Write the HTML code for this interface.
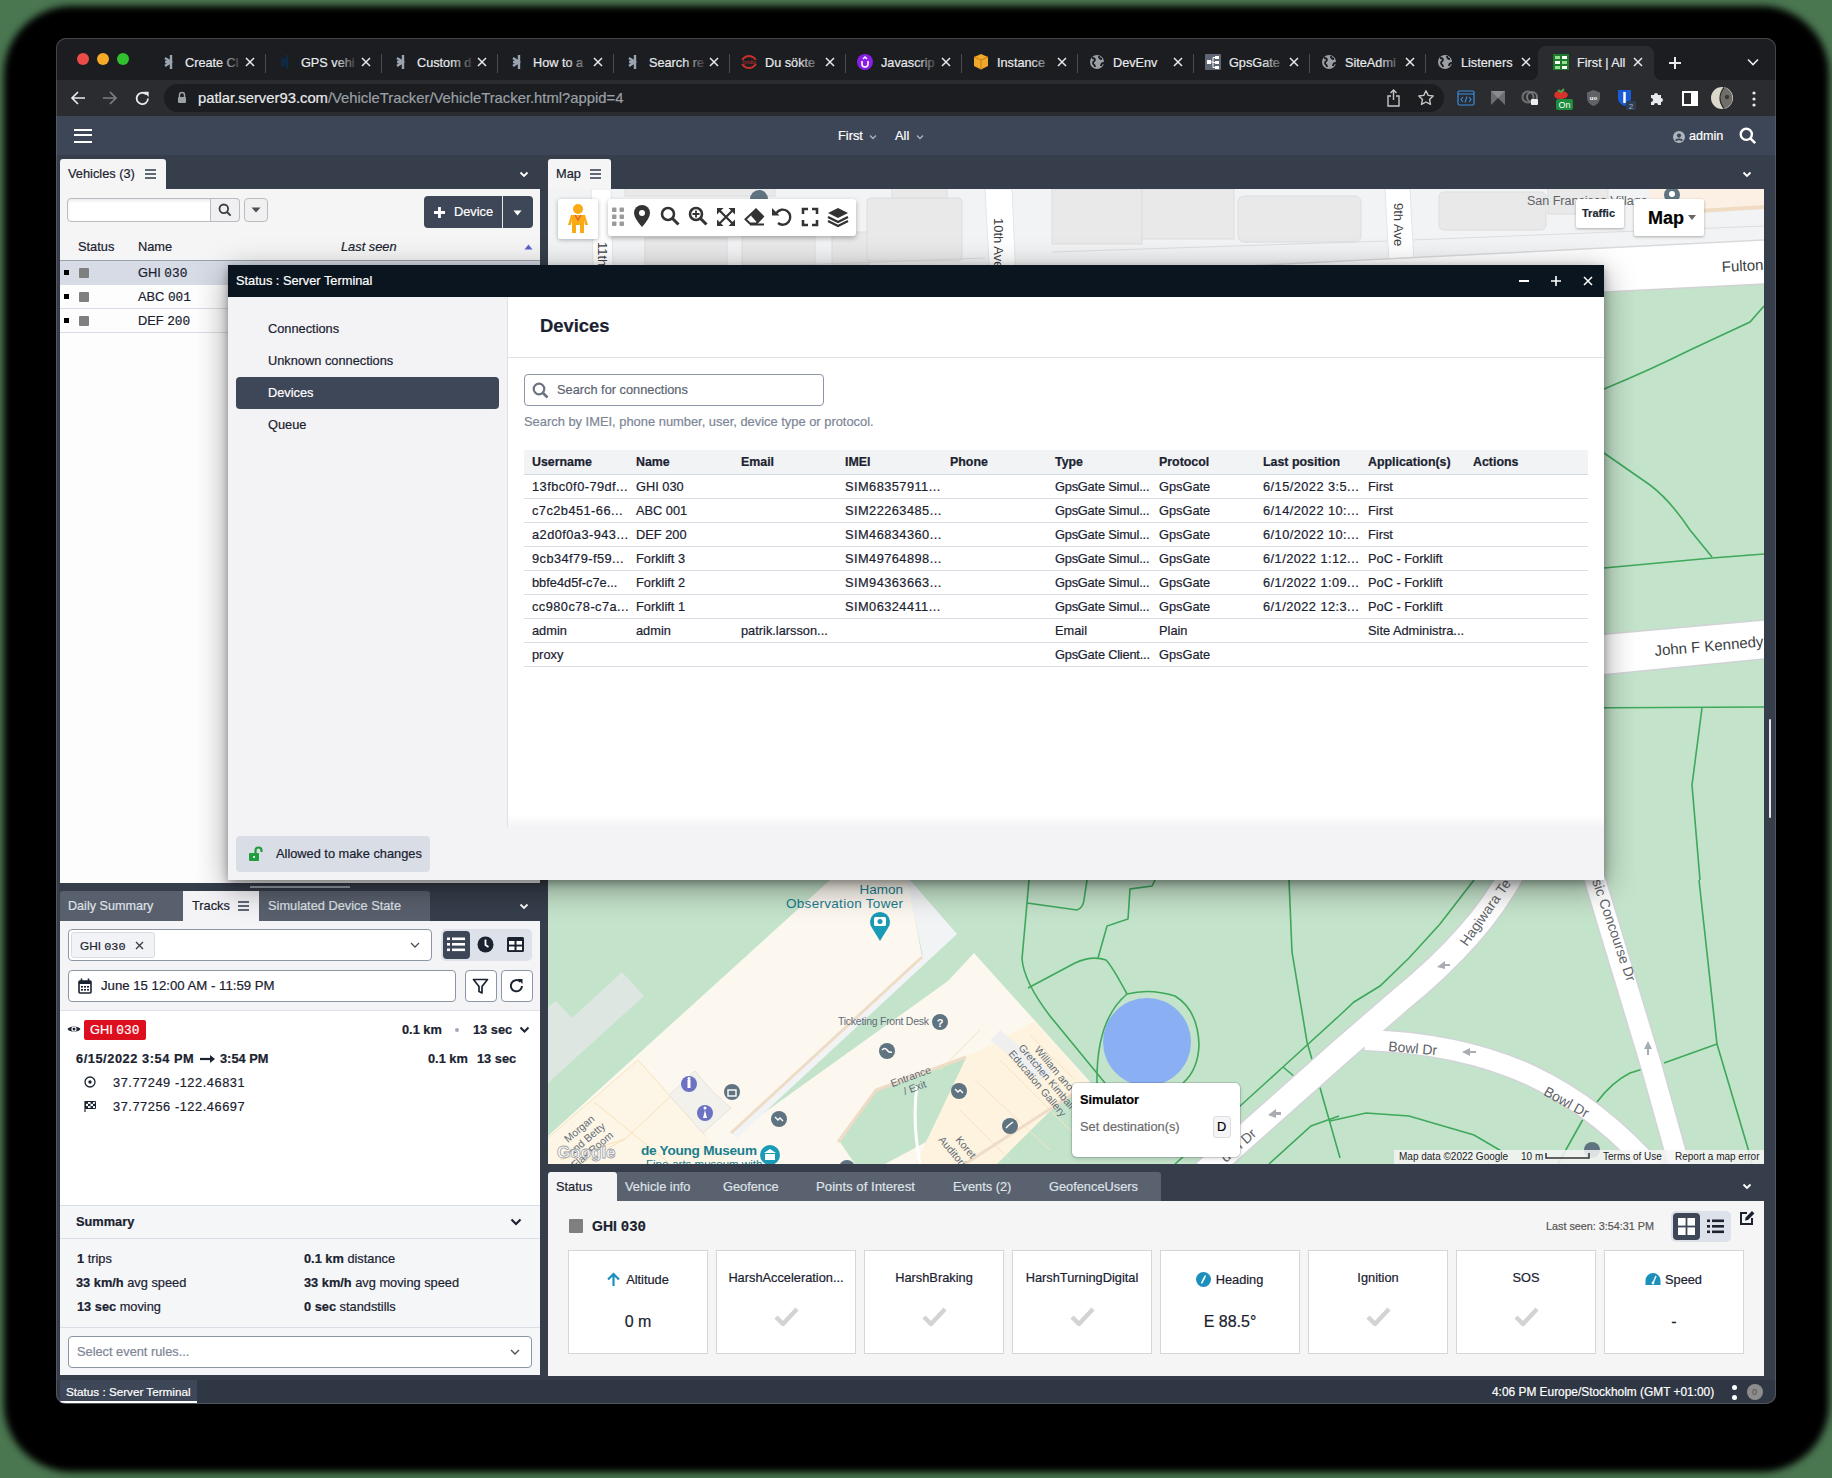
<!DOCTYPE html>
<html><head><meta charset="utf-8">
<style>
*{box-sizing:border-box;margin:0;padding:0}
html,body{width:1832px;height:1478px;overflow:hidden;background:#4a7650;font-family:"Liberation Sans",sans-serif;}
.a{position:absolute}
.t{position:absolute;white-space:nowrap;-webkit-text-stroke:0.2px currentColor}
.m{font-family:"Liberation Mono",monospace;font-size:1em}
#shadow{position:absolute;left:4px;top:6px;width:1825px;height:1466px;background:#000;border-radius:68px;filter:blur(3.5px)}
#win{position:absolute;left:0;top:0;width:1832px;height:1478px;clip-path:inset(38px 56px 74px 56px round 10px);background:#363e4b}
</style></head>
<body>
<div id="shadow"></div>
<div id="win">
<!-- ============ CHROME TABS ============ -->
<div class="a" style="left:56px;top:38px;width:1720px;height:42px;background:#1c1d20"></div>
<div class="a" style="left:77px;top:53px;width:12px;height:12px;border-radius:50%;background:#ec4c47"></div>
<div class="a" style="left:97px;top:53px;width:12px;height:12px;border-radius:50%;background:#f5ab26"></div>
<div class="a" style="left:117px;top:53px;width:12px;height:12px;border-radius:50%;background:#31c02e"></div>
<!-- active tab -->
<div class="a" style="left:1538px;top:46px;width:116px;height:34px;background:#2b2c30;border-radius:8px 8px 0 0"></div>
<div class="a" style="left:1530px;top:72px;width:8px;height:8px;background:radial-gradient(circle at 0 0,#1c1d20 8px,#2b2c30 8.5px)"></div>
<div class="a" style="left:1654px;top:72px;width:8px;height:8px;background:radial-gradient(circle at 100% 0,#1c1d20 8px,#2b2c30 8.5px)"></div>
<svg class="a" style="left:164px;top:54px" width="10" height="16" viewBox="0 0 10 16"><path d="M7 1v14M1 4l6 4-6 4M1 8h6" stroke="#9aa3b0" stroke-width="2.4" fill="none"/></svg>
<div class="t" style="left:185px;top:55px;width:58px;overflow:hidden;font-size:12.7px;line-height:16px;color:#e8eaed">Create Cl</div>
<div class="a" style="left:219px;top:54px;width:26px;height:16px;background:linear-gradient(90deg,rgba(28,29,32,0),#1c1d20 95%)"></div>
<svg class="a" style="left:245px;top:57px" width="10" height="10" viewBox="0 0 10 10"><path d="M1 1l8 8M9 1L1 9" stroke="#e8eaed" stroke-width="1.5"/></svg>
<div class="a" style="left:265px;top:54px;width:1px;height:19px;background:#4a4b4f"></div>
<svg class="a" style="left:280px;top:54px" width="10" height="16" viewBox="0 0 10 16"><path d="M7 1v14M1 4l6 4-6 4M1 8h6" stroke="#0e2a47" stroke-width="2.4" fill="none"/></svg>
<div class="t" style="left:301px;top:55px;width:58px;overflow:hidden;font-size:12.7px;line-height:16px;color:#e8eaed">GPS vehi</div>
<div class="a" style="left:335px;top:54px;width:26px;height:16px;background:linear-gradient(90deg,rgba(28,29,32,0),#1c1d20 95%)"></div>
<svg class="a" style="left:361px;top:57px" width="10" height="10" viewBox="0 0 10 10"><path d="M1 1l8 8M9 1L1 9" stroke="#e8eaed" stroke-width="1.5"/></svg>
<div class="a" style="left:381px;top:54px;width:1px;height:19px;background:#4a4b4f"></div>
<svg class="a" style="left:396px;top:54px" width="10" height="16" viewBox="0 0 10 16"><path d="M7 1v14M1 4l6 4-6 4M1 8h6" stroke="#9aa3b0" stroke-width="2.4" fill="none"/></svg>
<div class="t" style="left:417px;top:55px;width:58px;overflow:hidden;font-size:12.7px;line-height:16px;color:#e8eaed">Custom d</div>
<div class="a" style="left:451px;top:54px;width:26px;height:16px;background:linear-gradient(90deg,rgba(28,29,32,0),#1c1d20 95%)"></div>
<svg class="a" style="left:477px;top:57px" width="10" height="10" viewBox="0 0 10 10"><path d="M1 1l8 8M9 1L1 9" stroke="#e8eaed" stroke-width="1.5"/></svg>
<div class="a" style="left:497px;top:54px;width:1px;height:19px;background:#4a4b4f"></div>
<svg class="a" style="left:512px;top:54px" width="10" height="16" viewBox="0 0 10 16"><path d="M7 1v14M1 4l6 4-6 4M1 8h6" stroke="#9aa3b0" stroke-width="2.4" fill="none"/></svg>
<div class="t" style="left:533px;top:55px;width:58px;overflow:hidden;font-size:12.7px;line-height:16px;color:#e8eaed">How to a</div>
<div class="a" style="left:567px;top:54px;width:26px;height:16px;background:linear-gradient(90deg,rgba(28,29,32,0),#1c1d20 95%)"></div>
<svg class="a" style="left:593px;top:57px" width="10" height="10" viewBox="0 0 10 10"><path d="M1 1l8 8M9 1L1 9" stroke="#e8eaed" stroke-width="1.5"/></svg>
<div class="a" style="left:613px;top:54px;width:1px;height:19px;background:#4a4b4f"></div>
<svg class="a" style="left:628px;top:54px" width="10" height="16" viewBox="0 0 10 16"><path d="M7 1v14M1 4l6 4-6 4M1 8h6" stroke="#9aa3b0" stroke-width="2.4" fill="none"/></svg>
<div class="t" style="left:649px;top:55px;width:58px;overflow:hidden;font-size:12.7px;line-height:16px;color:#e8eaed">Search re</div>
<div class="a" style="left:683px;top:54px;width:26px;height:16px;background:linear-gradient(90deg,rgba(28,29,32,0),#1c1d20 95%)"></div>
<svg class="a" style="left:709px;top:57px" width="10" height="10" viewBox="0 0 10 10"><path d="M1 1l8 8M9 1L1 9" stroke="#e8eaed" stroke-width="1.5"/></svg>
<div class="a" style="left:729px;top:54px;width:1px;height:19px;background:#4a4b4f"></div>
<svg class="a" style="left:741px;top:55px" width="16" height="14" viewBox="0 0 16 14"><ellipse cx="8" cy="7" rx="7" ry="6" fill="none" stroke="#c9302c" stroke-width="2"/><rect x="0" y="5" width="16" height="4" fill="#1c1d20"/><text x="8" y="9" font-size="5" fill="#c9302c" text-anchor="middle" font-family="Liberation Sans">fyndiq</text></svg>
<div class="t" style="left:765px;top:55px;width:58px;overflow:hidden;font-size:12.7px;line-height:16px;color:#e8eaed">Du sökte</div>
<div class="a" style="left:799px;top:54px;width:26px;height:16px;background:linear-gradient(90deg,rgba(28,29,32,0),#1c1d20 95%)"></div>
<svg class="a" style="left:825px;top:57px" width="10" height="10" viewBox="0 0 10 10"><path d="M1 1l8 8M9 1L1 9" stroke="#e8eaed" stroke-width="1.5"/></svg>
<div class="a" style="left:845px;top:54px;width:1px;height:19px;background:#4a4b4f"></div>
<svg class="a" style="left:857px;top:54px" width="16" height="16" viewBox="0 0 16 16"><circle cx="8" cy="8" r="8" fill="#8a1ee8"/><path d="M5 7v3a3 3 0 0 0 6 0V7" stroke="#fff" stroke-width="1.6" fill="none"/><path d="M6 5l2-2 2 2" stroke="#fff" stroke-width="1.4" fill="none"/></svg>
<div class="t" style="left:881px;top:55px;width:58px;overflow:hidden;font-size:12.7px;line-height:16px;color:#e8eaed">Javascrip</div>
<div class="a" style="left:915px;top:54px;width:26px;height:16px;background:linear-gradient(90deg,rgba(28,29,32,0),#1c1d20 95%)"></div>
<svg class="a" style="left:941px;top:57px" width="10" height="10" viewBox="0 0 10 10"><path d="M1 1l8 8M9 1L1 9" stroke="#e8eaed" stroke-width="1.5"/></svg>
<div class="a" style="left:961px;top:54px;width:1px;height:19px;background:#4a4b4f"></div>
<svg class="a" style="left:973px;top:53px" width="16" height="17" viewBox="0 0 16 17"><path d="M8 1l7 3v9l-7 3.5L1 13V4z" fill="#f0a82a"/><path d="M1 4l7 3 7-3M8 7v9.5" stroke="#c77d12" stroke-width="1" fill="none"/></svg>
<div class="t" style="left:997px;top:55px;width:58px;overflow:hidden;font-size:12.7px;line-height:16px;color:#e8eaed">Instance</div>
<div class="a" style="left:1031px;top:54px;width:26px;height:16px;background:linear-gradient(90deg,rgba(28,29,32,0),#1c1d20 95%)"></div>
<svg class="a" style="left:1057px;top:57px" width="10" height="10" viewBox="0 0 10 10"><path d="M1 1l8 8M9 1L1 9" stroke="#e8eaed" stroke-width="1.5"/></svg>
<div class="a" style="left:1077px;top:54px;width:1px;height:19px;background:#4a4b4f"></div>
<svg class="a" style="left:1089px;top:54px" width="16" height="16" viewBox="0 0 16 16"><circle cx="8" cy="8" r="7" fill="#9aa0a6"/><path d="M3 4c2 0 3 1 3 2s-2 1-2 3 2 1 2 4M10 2c0 2 1 3 3 3M15 9c-2 0-3 1-3 3" stroke="#1c1d20" stroke-width="1.8" fill="none"/></svg>
<div class="t" style="left:1113px;top:55px;font-size:12.7px;line-height:16px;color:#e8eaed">DevEnv</div>
<svg class="a" style="left:1173px;top:57px" width="10" height="10" viewBox="0 0 10 10"><path d="M1 1l8 8M9 1L1 9" stroke="#e8eaed" stroke-width="1.5"/></svg>
<div class="a" style="left:1193px;top:54px;width:1px;height:19px;background:#4a4b4f"></div>
<svg class="a" style="left:1205px;top:54px" width="16" height="16" viewBox="0 0 16 16"><rect width="16" height="16" rx="1" fill="#5f6673"/><rect x="2" y="6" width="4" height="4" fill="#fff"/><rect x="10" y="2" width="4" height="3" fill="#fff"/><rect x="10" y="7" width="4" height="3" fill="#fff"/><rect x="10" y="12" width="4" height="3" fill="#fff"/><path d="M6 8h2M8 3.5v10M8 3.5h2M8 8.5h2M8 13.5h2" stroke="#fff" stroke-width="1"/></svg>
<div class="t" style="left:1229px;top:55px;width:58px;overflow:hidden;font-size:12.7px;line-height:16px;color:#e8eaed">GpsGate</div>
<div class="a" style="left:1263px;top:54px;width:26px;height:16px;background:linear-gradient(90deg,rgba(28,29,32,0),#1c1d20 95%)"></div>
<svg class="a" style="left:1289px;top:57px" width="10" height="10" viewBox="0 0 10 10"><path d="M1 1l8 8M9 1L1 9" stroke="#e8eaed" stroke-width="1.5"/></svg>
<div class="a" style="left:1309px;top:54px;width:1px;height:19px;background:#4a4b4f"></div>
<svg class="a" style="left:1321px;top:54px" width="16" height="16" viewBox="0 0 16 16"><circle cx="8" cy="8" r="7" fill="#9aa0a6"/><path d="M3 4c2 0 3 1 3 2s-2 1-2 3 2 1 2 4M10 2c0 2 1 3 3 3M15 9c-2 0-3 1-3 3" stroke="#1c1d20" stroke-width="1.8" fill="none"/></svg>
<div class="t" style="left:1345px;top:55px;width:58px;overflow:hidden;font-size:12.7px;line-height:16px;color:#e8eaed">SiteAdmi</div>
<div class="a" style="left:1379px;top:54px;width:26px;height:16px;background:linear-gradient(90deg,rgba(28,29,32,0),#1c1d20 95%)"></div>
<svg class="a" style="left:1405px;top:57px" width="10" height="10" viewBox="0 0 10 10"><path d="M1 1l8 8M9 1L1 9" stroke="#e8eaed" stroke-width="1.5"/></svg>
<div class="a" style="left:1425px;top:54px;width:1px;height:19px;background:#4a4b4f"></div>
<svg class="a" style="left:1437px;top:54px" width="16" height="16" viewBox="0 0 16 16"><circle cx="8" cy="8" r="7" fill="#9aa0a6"/><path d="M3 4c2 0 3 1 3 2s-2 1-2 3 2 1 2 4M10 2c0 2 1 3 3 3M15 9c-2 0-3 1-3 3" stroke="#1c1d20" stroke-width="1.8" fill="none"/></svg>
<div class="t" style="left:1461px;top:55px;font-size:12.7px;line-height:16px;color:#e8eaed">Listeners</div>
<svg class="a" style="left:1521px;top:57px" width="10" height="10" viewBox="0 0 10 10"><path d="M1 1l8 8M9 1L1 9" stroke="#e8eaed" stroke-width="1.5"/></svg>
<svg class="a" style="left:1553px;top:54px" width="16" height="16" viewBox="0 0 16 16"><rect width="16" height="16" fill="#1f7a2e"/><rect x="2" y="2" width="5" height="3" fill="#8ee08e"/><rect x="9" y="2" width="5" height="3" fill="#fff"/><rect x="2" y="7" width="5" height="3" fill="#fff"/><rect x="9" y="7" width="5" height="3" fill="#8ee08e"/><rect x="2" y="12" width="5" height="3" fill="#8ee08e"/><rect x="9" y="12" width="5" height="3" fill="#fff"/></svg>
<div class="t" style="left:1577px;top:55px;font-size:12.7px;line-height:16px;color:#e8eaed">First | All</div>
<svg class="a" style="left:1633px;top:57px" width="10" height="10" viewBox="0 0 10 10"><path d="M1 1l8 8M9 1L1 9" stroke="#e8eaed" stroke-width="1.5"/></svg>
<!-- new tab + and chevron -->
<svg class="a" style="left:1668px;top:56px" width="14" height="14" viewBox="0 0 14 14"><path d="M7 1v12M1 7h12" stroke="#e8eaed" stroke-width="2"/></svg>
<svg class="a" style="left:1747px;top:58px" width="12" height="8" viewBox="0 0 12 8"><path d="M1 1.5l5 5 5-5" stroke="#e8eaed" stroke-width="1.6" fill="none"/></svg>

<!-- ============ TOOLBAR ============ -->
<div class="a" style="left:56px;top:80px;width:1720px;height:36px;background:#2b2c30"></div>
<svg class="a" style="left:70px;top:90px" width="16" height="16" viewBox="0 0 16 16"><path d="M15 8H2M8 2L2 8l6 6" stroke="#e8eaed" stroke-width="1.7" fill="none"/></svg>
<svg class="a" style="left:102px;top:90px" width="16" height="16" viewBox="0 0 16 16"><path d="M1 8h13M8 2l6 6-6 6" stroke="#7d7e80" stroke-width="1.7" fill="none"/></svg>
<svg class="a" style="left:134px;top:90px" width="17" height="17" viewBox="0 0 17 17"><path d="M14 8.5A5.7 5.7 0 1 1 12.2 4.3" stroke="#e8eaed" stroke-width="1.8" fill="none"/><path d="M9.5 1.8h5.2v5.2z" fill="#e8eaed"/></svg>
<div class="a" style="left:164px;top:84px;width:1280px;height:28px;border-radius:14px;background:#1c1d20"></div>
<svg class="a" style="left:177px;top:91px" width="10" height="13" viewBox="0 0 10 13"><path d="M2.5 6V4a2.5 2.5 0 0 1 5 0v2" stroke="#9aa0a6" stroke-width="1.5" fill="none"/><rect x="1" y="6" width="8" height="6" rx="1" fill="#9aa0a6"/></svg>
<div class="t" style="left:198px;top:89px;font-size:14.8px;line-height:18px;color:#e8eaed">patlar.server93.com<span style="color:#9aa0a6">/VehicleTracker/VehicleTracker.html?appid=4</span></div>
<!-- share -->
<svg class="a" style="left:1386px;top:89px" width="15" height="18" viewBox="0 0 15 18"><path d="M7.5 1v10M4.5 4l3-3 3 3" stroke="#c4c7c5" stroke-width="1.4" fill="none"/><path d="M5 7H2v10h11V7h-3" stroke="#c4c7c5" stroke-width="1.4" fill="none"/></svg>
<!-- star -->
<svg class="a" style="left:1417px;top:89px" width="18" height="18" viewBox="0 0 18 18"><path d="M9 1.8l2.2 4.6 5 .6-3.7 3.4 1 5L9 13l-4.5 2.4 1-5L1.8 7l5-.6z" stroke="#c4c7c5" stroke-width="1.4" fill="none" stroke-linejoin="round"/></svg>
<!-- extension icons -->
<svg class="a" style="left:1457px;top:90px" width="18" height="16" viewBox="0 0 18 16"><rect x="1" y="1" width="16" height="14" rx="1.5" stroke="#3b8ee0" stroke-width="1.2" fill="none"/><path d="M1 4h16" stroke="#3b8ee0" stroke-width="1"/><path d="M6 7l-2 2.5 2 2.5M12 7l2 2.5-2 2.5M10 6.5l-2 6" stroke="#3b8ee0" stroke-width="1.1" fill="none"/></svg>
<svg class="a" style="left:1490px;top:90px" width="16" height="16" viewBox="0 0 16 16"><path d="M1 1h14v14L8 8 1 15z" fill="#6c6d70"/><path d="M1 1h14L8 8z" fill="#8a8b8e"/></svg>
<svg class="a" style="left:1521px;top:89px" width="18" height="18" viewBox="0 0 18 18"><circle cx="7" cy="8" r="5.5" stroke="#6b6c6f" stroke-width="2.2" fill="none"/><circle cx="11" cy="8" r="5" stroke="#77787b" stroke-width="2" fill="none"/><rect x="10" y="10" width="7" height="6" rx="1" fill="#eee"/></svg>
<svg class="a" style="left:1552px;top:87px" width="22" height="24" viewBox="0 0 22 24"><path d="M3 6c2-3 8-3 12 0 2 2 0 6-6 6S1 9 3 6z" fill="#d8322b"/><path d="M6 3l3 2 3-3" stroke="#4ba84a" stroke-width="2" fill="none"/><rect x="4" y="12" width="17" height="11" rx="2" fill="#1e8e3e"/><text x="12.5" y="21" font-size="9" fill="#fff" text-anchor="middle" font-family="Liberation Sans">On</text></svg>
<svg class="a" style="left:1586px;top:89px" width="15" height="18" viewBox="0 0 15 18"><path d="M7.5 1l6.5 2.5v5c0 4-3 7.5-6.5 8.5C4 16 1 12.5 1 8.5v-5z" fill="#5f6368"/><text x="7.5" y="10.5" font-size="6" fill="#fff" text-anchor="middle" font-family="Liberation Sans" font-weight="bold">uo</text></svg>
<svg class="a" style="left:1617px;top:89px" width="20" height="22" viewBox="0 0 20 22"><path d="M1 1h13v8c0 4-3 6.5-6.5 8C4 15.5 1 13 1 9z" fill="#1a5bd6"/><path d="M7.5 3v11" stroke="#fff" stroke-width="2.5"/><rect x="9" y="12" width="10" height="9" rx="1.5" fill="#2e3e55"/><text x="14" y="19.5" font-size="8" fill="#a7b3c3" text-anchor="middle" font-family="Liberation Sans">2</text></svg>
<svg class="a" style="left:1649px;top:90px" width="17" height="16" viewBox="0 0 17 16"><path d="M2 5h3a2 2 0 1 1 4 0h3v3a2 2 0 1 1 0 4v3H9a2 2 0 1 0-4 0H2v-3a2 2 0 1 0 0-4z" fill="#e8eaed"/></svg>
<svg class="a" style="left:1682px;top:91px" width="16" height="15" viewBox="0 0 16 15"><rect x="1" y="1" width="14" height="13" stroke="#fff" stroke-width="2" fill="none"/><rect x="9" y="1" width="6" height="13" fill="#fff"/></svg>
<svg class="a" style="left:1711px;top:87px" width="22" height="22" viewBox="0 0 22 22"><circle cx="11" cy="11" r="11" fill="#dcd8cc"/><path d="M13 0.3A11 11 0 0 1 13 21.7Q8 16 9 11T13 0.3z" fill="#6f6d68"/><path d="M13 0.3Q9 6 9 11T13 21.7" stroke="#2a2a28" stroke-width="1.2" fill="none"/><circle cx="16" cy="10" r="2.2" fill="#3a3936"/></svg>
<svg class="a" style="left:1751px;top:91px" width="6" height="16" viewBox="0 0 6 16"><circle cx="3" cy="2" r="1.6" fill="#e8eaed"/><circle cx="3" cy="8" r="1.6" fill="#e8eaed"/><circle cx="3" cy="14" r="1.6" fill="#e8eaed"/></svg>
<!-- ============ APP HEADER ============ -->
<div class="a" style="left:56px;top:116px;width:1720px;height:39px;background:#3d4656"></div>
<div class="a" style="left:74px;top:129px;width:18px;height:2px;background:#fff"></div>
<div class="a" style="left:74px;top:134px;width:18px;height:2px;background:#fff"></div>
<div class="a" style="left:74px;top:141px;width:18px;height:2.2px;background:#fff"></div>
<div class="t" style="left:838px;top:128px;font-size:12.8px;line-height:16px;color:#fff">First</div>
<svg class="a" style="left:869px;top:134px" width="8" height="6" viewBox="0 0 8 6"><path d="M1 1.5l3 3 3-3" stroke="#aab1bb" stroke-width="1.4" fill="none"/></svg>
<div class="t" style="left:895px;top:128px;font-size:12.8px;line-height:16px;color:#fff">All</div>
<svg class="a" style="left:916px;top:134px" width="8" height="6" viewBox="0 0 8 6"><path d="M1 1.5l3 3 3-3" stroke="#aab1bb" stroke-width="1.4" fill="none"/></svg>
<svg class="a" style="left:1673px;top:131px" width="12" height="12" viewBox="0 0 12 12"><circle cx="6" cy="6" r="6" fill="#aeb4bd"/><circle cx="6" cy="4.6" r="2.1" fill="#3d4656"/><path d="M2.6 9.6a4 2.6 0 0 1 6.8 0" stroke="#3d4656" stroke-width="1.6" fill="none"/></svg>
<div class="t" style="left:1689px;top:128px;font-size:12.6px;line-height:16px;color:#fff">admin</div>
<svg class="a" style="left:1739px;top:127px" width="18" height="18" viewBox="0 0 18 18"><circle cx="7.3" cy="7.3" r="5.6" stroke="#fff" stroke-width="2.4" fill="none"/><path d="M11.4 11.4l4.8 4.8" stroke="#fff" stroke-width="2.6"/></svg>

<!-- ============ PANEL TAB ROWS ============ -->
<div class="a" style="left:60px;top:159px;width:106px;height:31px;background:#f5f5f5;border-radius:3px 3px 0 0"></div>
<div class="t" style="left:68px;top:166px;font-size:12.8px;line-height:16px;color:#1a2230">Vehicles (3)</div>
<div class="a" style="left:145px;top:169px;width:11px;height:1.6px;background:#606876"></div>
<div class="a" style="left:145px;top:173px;width:11px;height:1.6px;background:#606876"></div>
<div class="a" style="left:145px;top:177px;width:11px;height:1.6px;background:#606876"></div>
<svg class="a" style="left:519px;top:171px" width="10" height="7" viewBox="0 0 10 7"><path d="M1.5 1.5l3.5 3.5 3.5-3.5" stroke="#fff" stroke-width="1.8" fill="none"/></svg>

<div class="a" style="left:548px;top:159px;width:63px;height:31px;background:#f5f5f5;border-radius:3px 3px 0 0"></div>
<div class="t" style="left:556px;top:166px;font-size:12.8px;line-height:16px;color:#1a2230">Map</div>
<div class="a" style="left:590px;top:169px;width:11px;height:1.6px;background:#606876"></div>
<div class="a" style="left:590px;top:173px;width:11px;height:1.6px;background:#606876"></div>
<div class="a" style="left:590px;top:177px;width:11px;height:1.6px;background:#606876"></div>
<svg class="a" style="left:1742px;top:171px" width="10" height="7" viewBox="0 0 10 7"><path d="M1.5 1.5l3.5 3.5 3.5-3.5" stroke="#fff" stroke-width="1.8" fill="none"/></svg>
<!-- right scroll strip -->
<div class="a" style="left:1769px;top:719px;width:2px;height:99px;background:#e8e8e8;border-radius:1px"></div>
<!-- ============ VEHICLES PANEL ============ -->
<div class="a" style="left:60px;top:189px;width:480px;height:694px;background:#fdfdfd"></div>
<div class="a" style="left:60px;top:189px;width:480px;height:71px;background:#f5f5f5"></div>
<!-- search -->
<div class="a" style="left:67px;top:198px;width:173px;height:24px;border:1px solid #b9bcc2;border-radius:4px;background:#fff;box-shadow:inset 0 2px 3px rgba(0,0,0,.08)"></div>
<div class="a" style="left:210px;top:198px;width:30px;height:24px;border:1px solid #b9bcc2;border-radius:0 4px 4px 0;background:#f0f0f0"></div>
<svg class="a" style="left:218px;top:203px" width="14" height="14" viewBox="0 0 14 14"><circle cx="5.8" cy="5.8" r="4.3" stroke="#3a3f47" stroke-width="1.8" fill="none"/><path d="M9 9l3.6 3.6" stroke="#3a3f47" stroke-width="2"/></svg>
<div class="a" style="left:244px;top:198px;width:24px;height:24px;border:1px solid #b9bcc2;border-radius:4px;background:#f0f0f0"></div>
<svg class="a" style="left:251px;top:207px" width="10" height="6" viewBox="0 0 10 6"><path d="M0.5 0.5h9L5 5.5z" fill="#4a4f57"/></svg>
<!-- device button -->
<div class="a" style="left:424px;top:196px;width:109px;height:32px;border-radius:4px;background:#3e4757"></div>
<div class="a" style="left:502px;top:196px;width:1px;height:32px;background:#e8e8e8"></div>
<svg class="a" style="left:433px;top:206px" width="13" height="13" viewBox="0 0 13 13"><path d="M6.5 1v11M1 6.5h11" stroke="#fff" stroke-width="2.8"/></svg>
<div class="t" style="left:454px;top:204px;font-size:12.8px;line-height:16px;color:#fff">Device</div>
<svg class="a" style="left:513px;top:210px" width="9" height="6" viewBox="0 0 9 6"><path d="M0.5 0.5h8L4.5 5.5z" fill="#fff"/></svg>
<!-- table header -->
<div class="t" style="left:78px;top:239px;font-size:12.8px;line-height:16px;color:#1a2230">Status</div>
<div class="t" style="left:138px;top:239px;font-size:12.8px;line-height:16px;color:#1a2230">Name</div>
<div class="t" style="left:341px;top:239px;font-size:12.8px;line-height:16px;color:#1a2230;font-style:italic">Last seen</div>
<svg class="a" style="left:524px;top:244px" width="9" height="6" viewBox="0 0 9 6"><path d="M0.5 5.5h8L4.5 0.5z" fill="#5b63c9"/></svg>
<div class="a" style="left:60px;top:260px;width:480px;height:1px;background:#98a0ad"></div>
<!-- rows -->
<div class="a" style="left:60px;top:261px;width:480px;height:24px;background:#d6dbe5"></div>
<div class="a" style="left:60px;top:308px;width:480px;height:1px;background:#d9dde5"></div>
<div class="a" style="left:60px;top:332px;width:480px;height:1px;background:#d9dde5"></div>
<div class="a" style="left:64px;top:270px;width:5px;height:5px;background:#000"></div>
<div class="a" style="left:79px;top:268px;width:10px;height:10px;background:#7f7f7f;border-radius:1px"></div>
<div class="a" style="left:64px;top:294px;width:5px;height:5px;background:#000"></div>
<div class="a" style="left:79px;top:292px;width:10px;height:10px;background:#7f7f7f;border-radius:1px"></div>
<div class="a" style="left:64px;top:318px;width:5px;height:5px;background:#000"></div>
<div class="a" style="left:79px;top:316px;width:10px;height:10px;background:#7f7f7f;border-radius:1px"></div>
<div class="t" style="left:138px;top:265px;font-size:12.8px;line-height:16px;color:#1a2230">GHI <span class="m">030</span></div>
<div class="t" style="left:138px;top:289px;font-size:12.8px;line-height:16px;color:#1a2230">ABC <span class="m">001</span></div>
<div class="t" style="left:138px;top:313px;font-size:12.8px;line-height:16px;color:#1a2230">DEF <span class="m">200</span></div>

<!-- splitter -->
<div class="a" style="left:250px;top:886px;width:100px;height:2px;background:#9aa1ab"></div>

<!-- ============ TRACKS PANEL ============ -->
<div class="a" style="left:60px;top:891px;width:123px;height:30px;background:#59606d;border-radius:3px 0 0 0"></div>
<div class="t" style="left:68px;top:898px;font-size:12.6px;line-height:16px;color:#dfe2e7">Daily Summary</div>
<div class="a" style="left:183px;top:891px;width:76px;height:30px;background:#f4f4f6"></div>
<div class="t" style="left:192px;top:898px;font-size:12.8px;line-height:16px;color:#1a2230">Tracks</div>
<div class="a" style="left:238px;top:901px;width:11px;height:1.6px;background:#606876"></div>
<div class="a" style="left:238px;top:905px;width:11px;height:1.6px;background:#606876"></div>
<div class="a" style="left:238px;top:909px;width:11px;height:1.6px;background:#606876"></div>
<div class="a" style="left:259px;top:891px;width:171px;height:30px;background:#59606d;border-radius:0 3px 0 0"></div>
<div class="t" style="left:268px;top:898px;font-size:12.8px;line-height:16px;color:#dfe2e7">Simulated Device State</div>
<svg class="a" style="left:519px;top:903px" width="10" height="7" viewBox="0 0 10 7"><path d="M1.5 1.5l3.5 3.5 3.5-3.5" stroke="#fff" stroke-width="1.8" fill="none"/></svg>

<div class="a" style="left:60px;top:921px;width:480px;height:454px;background:#fff"></div>
<div class="a" style="left:60px;top:921px;width:480px;height:90px;background:#f4f4f6;border-bottom:1px solid #dde1e8"></div>
<!-- vehicle select -->
<div class="a" style="left:68px;top:929px;width:364px;height:32px;border:1px solid #8d96a5;border-radius:4px;background:#fff"></div>
<div class="a" style="left:71px;top:932px;width:84px;height:26px;border:1px solid #d6dbe4;border-radius:3px;background:#f2f3f6"></div>
<div class="t" style="left:80px;top:938px;font-size:11.8px;line-height:16px;color:#1a2230">GHI <span class="m">030</span></div>
<svg class="a" style="left:135px;top:941px" width="9" height="9" viewBox="0 0 9 9"><path d="M1 1l7 7M8 1L1 8" stroke="#3a404a" stroke-width="1.4"/></svg>
<svg class="a" style="left:410px;top:942px" width="10" height="6" viewBox="0 0 10 6"><path d="M1 1l4 4 4-4" stroke="#4a505a" stroke-width="1.3" fill="none"/></svg>
<!-- view toggles -->
<div class="a" style="left:441px;top:929px;width:91px;height:32px;border-radius:5px;background:#dde1e9"></div>
<div class="a" style="left:443px;top:931px;width:27px;height:28px;border-radius:4px;background:#3e4757"></div>
<svg class="a" style="left:447px;top:937px" width="18" height="15" viewBox="0 0 18 15"><rect x="0" y="0.5" width="3" height="2.6" fill="#fff"/><rect x="5" y="0.5" width="13" height="2.6" fill="#fff"/><rect x="0" y="6" width="3" height="2.6" fill="#fff"/><rect x="5" y="6" width="13" height="2.6" fill="#fff"/><rect x="0" y="11.5" width="3" height="2.6" fill="#fff"/><rect x="5" y="11.5" width="13" height="2.6" fill="#fff"/></svg>
<svg class="a" style="left:477px;top:936px" width="17" height="17" viewBox="0 0 17 17"><circle cx="8.5" cy="8.5" r="8" fill="#1b2230"/><path d="M8.5 3.5v5.5l3 2" stroke="#fff" stroke-width="1.8" fill="none"/></svg>
<svg class="a" style="left:507px;top:937px" width="17" height="15" viewBox="0 0 17 15"><rect x="0" y="0" width="17" height="15" rx="1.5" fill="#1b2230"/><rect x="2" y="4" width="5.5" height="3.6" fill="#fff"/><rect x="9.5" y="4" width="5.5" height="3.6" fill="#fff"/><rect x="2" y="9.5" width="5.5" height="3.6" fill="#fff"/><rect x="9.5" y="9.5" width="5.5" height="3.6" fill="#fff"/></svg>
<!-- date -->
<div class="a" style="left:68px;top:970px;width:388px;height:32px;border:1px solid #8d96a5;border-radius:4px;background:#fff"></div>
<svg class="a" style="left:78px;top:978px" width="14" height="16" viewBox="0 0 14 16"><rect x="1" y="3" width="12" height="12" rx="1" stroke="#1b2230" stroke-width="1.6" fill="none"/><rect x="1" y="3" width="12" height="3" fill="#1b2230"/><path d="M3.5 0.5v3M10.5 0.5v3" stroke="#1b2230" stroke-width="1.6"/><rect x="3" y="8" width="2" height="1.6" fill="#1b2230"/><rect x="6" y="8" width="2" height="1.6" fill="#1b2230"/><rect x="9" y="8" width="2" height="1.6" fill="#1b2230"/><rect x="3" y="11" width="2" height="1.6" fill="#1b2230"/><rect x="6" y="11" width="2" height="1.6" fill="#1b2230"/><rect x="9" y="11" width="2" height="1.6" fill="#1b2230"/></svg>
<div class="t" style="left:101px;top:978px;font-size:13.2px;line-height:16px;color:#1a2230">June 15 12:00 AM - 11:59 PM</div>
<div class="a" style="left:465px;top:970px;width:32px;height:32px;border:1px solid #8d96a5;border-radius:4px;background:#fff"></div>
<svg class="a" style="left:472px;top:978px" width="17" height="17" viewBox="0 0 17 17"><path d="M1.5 1.5h14L10 8.5v6.5l-3-1.6V8.5z" stroke="#1b2230" stroke-width="1.7" fill="none" stroke-linejoin="round"/></svg>
<div class="a" style="left:501px;top:970px;width:32px;height:32px;border:1px solid #8d96a5;border-radius:4px;background:#fff"></div>
<svg class="a" style="left:508px;top:977px" width="17" height="17" viewBox="0 0 17 17"><path d="M14 9a5.6 5.6 0 1 1-1.7-4.3" stroke="#1b2230" stroke-width="2" fill="none"/><path d="M9.5 2h5v5z" fill="#1b2230"/></svg>
<!-- track item -->
<svg class="a" style="left:67px;top:1024px" width="14" height="10" viewBox="0 0 14 10"><path d="M0.5 5C2.5 1.5 11.5 1.5 13.5 5 11.5 8.5 2.5 8.5 0.5 5z" fill="#1b2230"/><circle cx="7" cy="5" r="2.6" fill="#fff"/><circle cx="7" cy="5" r="1.5" fill="#1b2230"/></svg>
<div class="a" style="left:84px;top:1020px;width:62px;height:20px;border-radius:2px;background:#dd0f1f"></div>
<div class="t" style="left:90px;top:1022px;font-size:12.8px;line-height:16px;color:#fff">GHI <span class="m">030</span></div>
<div class="t" style="left:402px;top:1022px;font-size:12.8px;line-height:16px;color:#1a2230;font-weight:bold">0.1 km</div>
<div class="a" style="left:455px;top:1028px;width:4px;height:4px;border-radius:50%;background:#a3aab6"></div>
<div class="t" style="left:473px;top:1022px;font-size:12.8px;line-height:16px;color:#1a2230;font-weight:bold">13 sec</div>
<svg class="a" style="left:519px;top:1026px" width="11" height="8" viewBox="0 0 11 8"><path d="M1.5 1.5l4 4 4-4" stroke="#1b2230" stroke-width="2" fill="none"/></svg>
<div class="t" style="left:76px;top:1051px;font-size:12.8px;line-height:16px;color:#1a2230;font-weight:bold;letter-spacing:.55px">6/15/2022 3:54 PM</div>
<svg class="a" style="left:200px;top:1054px" width="16" height="10" viewBox="0 0 16 10"><path d="M0 5h12" stroke="#1b2230" stroke-width="2.2"/><path d="M10 1l5 4-5 4z" fill="#1b2230"/></svg>
<div class="t" style="left:220px;top:1051px;font-size:12.8px;line-height:16px;color:#1a2230;font-weight:bold">3:54 PM</div>
<div class="t" style="left:428px;top:1051px;font-size:12.8px;line-height:16px;color:#1a2230;font-weight:bold">0.1 km</div>
<div class="t" style="left:477px;top:1051px;font-size:12.8px;line-height:16px;color:#1a2230;font-weight:bold">13 sec</div>
<svg class="a" style="left:84px;top:1076px" width="12" height="12" viewBox="0 0 12 12"><circle cx="6" cy="6" r="5" stroke="#1b2230" stroke-width="1.3" fill="none"/><circle cx="6" cy="6" r="1.7" fill="#1b2230"/></svg>
<div class="t" style="left:113px;top:1075px;font-size:12.8px;line-height:16px;color:#1a2230;letter-spacing:.55px">37.77249 -122.46831</div>
<svg class="a" style="left:84px;top:1100px" width="12" height="12" viewBox="0 0 12 12"><path d="M1 1v11" stroke="#1b2230" stroke-width="1.2"/><path d="M1.5 1.5h10v7h-10z" fill="#fff" stroke="#1b2230" stroke-width="1"/><rect x="1.5" y="1.5" width="2.5" height="2.3" fill="#1b2230"/><rect x="6.5" y="1.5" width="2.5" height="2.3" fill="#1b2230"/><rect x="4" y="3.8" width="2.5" height="2.3" fill="#1b2230"/><rect x="9" y="3.8" width="2.5" height="2.3" fill="#1b2230"/><rect x="1.5" y="6.1" width="2.5" height="2.3" fill="#1b2230"/><rect x="6.5" y="6.1" width="2.5" height="2.3" fill="#1b2230"/></svg>
<div class="t" style="left:113px;top:1099px;font-size:12.8px;line-height:16px;color:#1a2230;letter-spacing:.55px">37.77256 -122.46697</div>
<!-- summary -->
<div class="a" style="left:60px;top:1205px;width:480px;height:170px;background:#f5f6f8"></div>
<div class="a" style="left:60px;top:1205px;width:480px;height:1px;background:#d9dde5"></div>
<div class="a" style="left:60px;top:1238px;width:480px;height:1px;background:#d9dde5"></div>
<div class="a" style="left:60px;top:1327px;width:480px;height:1px;background:#d9dde5"></div>
<div class="t" style="left:76px;top:1214px;font-size:12.8px;line-height:16px;color:#1a2230;font-weight:bold">Summary</div>
<svg class="a" style="left:510px;top:1218px" width="12" height="8" viewBox="0 0 12 8"><path d="M1.5 1.5l4.5 4.5 4.5-4.5" stroke="#1b2230" stroke-width="2.2" fill="none"/></svg>
<div class="t" style="left:77px;top:1251px;font-size:12.8px;line-height:16px;color:#1a2230"><b>1</b> trips</div>
<div class="t" style="left:76px;top:1275px;font-size:12.8px;line-height:16px;color:#1a2230"><b>33 km/h</b> avg speed</div>
<div class="t" style="left:77px;top:1299px;font-size:12.8px;line-height:16px;color:#1a2230"><b>13 sec</b> moving</div>
<div class="t" style="left:304px;top:1251px;font-size:12.8px;line-height:16px;color:#1a2230"><b>0.1 km</b> distance</div>
<div class="t" style="left:304px;top:1275px;font-size:12.8px;line-height:16px;color:#1a2230"><b>33 km/h</b> avg moving speed</div>
<div class="t" style="left:304px;top:1299px;font-size:12.8px;line-height:16px;color:#1a2230"><b>0 sec</b> standstills</div>
<div class="a" style="left:68px;top:1336px;width:464px;height:32px;border:1px solid #8d96a5;border-radius:4px;background:#fff"></div>
<div class="t" style="left:77px;top:1344px;font-size:12.8px;line-height:16px;color:#7d8696">Select event rules...</div>
<svg class="a" style="left:510px;top:1349px" width="10" height="6" viewBox="0 0 10 6"><path d="M1 1l4 4 4-4" stroke="#4a505a" stroke-width="1.3" fill="none"/></svg>

<!-- ============ STATUS BAR ============ -->
<div class="a" style="left:56px;top:1380px;width:1720px;height:24px;background:#2f3744"></div>
<div class="a" style="left:60px;top:1380px;width:137px;height:23px;background:#3e4757"></div>
<div class="a" style="left:60px;top:1401px;width:137px;height:2px;background:#fff"></div>
<div class="t" style="left:66px;top:1384px;font-size:11.7px;line-height:16px;color:#fff">Status : Server Terminal</div>
<div class="t" style="left:1492px;top:1384px;font-size:11.9px;line-height:16px;color:#fff">4:06 PM Europe/Stockholm (GMT +01:00)</div>
<div class="a" style="left:1732px;top:1385px;width:5px;height:5px;border-radius:50%;background:#fff"></div>
<div class="a" style="left:1732px;top:1395px;width:5px;height:5px;border-radius:50%;background:#fff"></div>
<div class="a" style="left:1747px;top:1384px;width:16px;height:16px;border-radius:50%;background:#8d8d8d"></div>
<div class="t" style="left:1752px;top:1386px;font-size:9px;line-height:12px;color:#5a5a5a">0</div>
<!-- ============ MAP ============ -->
<svg class="a" style="left:548px;top:189px" width="1216" height="975" viewBox="548 189 1216 975" font-family="Liberation Sans">
  <rect x="548" y="189" width="1216" height="975" fill="#c4e3cb"/>
  <!-- blocks area -->
  <polygon points="548,189 1764,189 1764,240 548,301" fill="#f1f3f4"/>
  <!-- buildings -->
  <g fill="#e9e9ea" stroke="#dcdddf" stroke-width="1">
    <rect x="625" y="186" width="150" height="10"/>
    <rect x="645" y="238" width="82" height="27"/>
    <rect x="742" y="236" width="73" height="29"/>
    <rect x="832" y="232" width="37" height="33"/>
    <rect x="867" y="198" width="95" height="63" rx="4"/>
    <rect x="892" y="186" width="55" height="12"/>
    <rect x="1052" y="189" width="90" height="55"/>
    <rect x="1142" y="189" width="92" height="50"/>
    <rect x="1238" y="196" width="123" height="46" rx="6"/>
    <rect x="1439" y="192" width="107" height="38" rx="5"/>
    <rect x="1548" y="186" width="60" height="28"/>
  </g>
  <g stroke="#dcdddf" stroke-width="1" fill="none">
    <path d="M1052 252 L1387 241"/><path d="M613 272 L985 258"/><path d="M1412 240 L1764 226"/>
  </g>
  <!-- vertical streets -->
  <polygon points="591,189 611,189 614,301 594,302" fill="#fff" stroke="#e3e5e8" stroke-width="1"/>
  <polygon points="985,189 1012,189 1016,280 990,281" fill="#fff" stroke="#e3e5e8" stroke-width="1"/>
  <polygon points="1385,189 1410,189 1414,262 1389,263" fill="#fff" stroke="#e3e5e8" stroke-width="1"/>

  <polygon points="1650,189 1764,189 1764,207 1650,214" fill="#fcefe3"/>
  <path d="M1650 214 L1764 207" stroke="#f0dcc3" stroke-width="4"/>
  <text x="994" y="218" font-size="13" fill="#3c4043" transform="rotate(90 994 218)">10th Ave</text>
  <text x="1394" y="203" font-size="13" fill="#3c4043" transform="rotate(90 1394 203)">9th Ave</text>
  <text x="598" y="242" font-size="13" fill="#3c4043" transform="rotate(90 598 242)">11th Ave</text>
  <text x="1527" y="205" font-size="12.5" fill="#5f6368">San Francisco Village</text>
  <circle cx="1672" cy="195" r="8" fill="#5f7381"/>
  <circle cx="1672" cy="194" r="3" fill="#fff"/>
  <circle cx="759" cy="199" r="9" fill="#5f7381"/>
  <!-- Fulton -->
  <polygon points="548,301 1764,240 1764,284 548,345" fill="#fff"/>
  <path d="M548 301 L1764 240" stroke="#d9dadd" stroke-width="1.5"/>
  <path d="M548 345 L1764 284" stroke="#d0d2d5" stroke-width="1.5"/>
  <text x="1722" y="272" font-size="15" fill="#3c4043" transform="rotate(-3 1722 272)">Fulton</text>
  <!-- right strip paths -->
  <g stroke="#3ea85b" stroke-width="1.6" fill="none">
    <path d="M1560 410 L1604 389 Q1650 370 1690 350 L1750 322 L1764 306"/>
    <path d="M1560 430 L1604 453 L1650 485 Q1670 500 1690 530 L1712 557"/>
    <path d="M1560 572 L1604 568 L1712 558 L1764 554"/>
    <path d="M1560 708 L1764 707"/>
    <path d="M1702 708 L1692 785 L1700 880"/>
  </g>
  <!-- JFK -->
  <polygon points="1540,640 1764,620 1764,659 1540,681" fill="#fff"/>
  <path d="M1540 640 L1764 620" stroke="#d0d2d5" stroke-width="1.5"/>
  <path d="M1540 681 L1764 659" stroke="#d0d2d5" stroke-width="1.5"/>
  <text x="1655" y="656" font-size="15" fill="#3c4043" transform="rotate(-5 1655 656)">John F Kennedy</text>

  <!-- ===== bottom map ===== -->
  <!-- beige union -->
  <polygon points="548,1136 830,880 908,880 922,957 733,1135 948,981 974,953 1091,1083 1054,1107 995,1164 548,1164" fill="#fcf8f0"/>
  <polygon points="548,1138 638,1060 705,1135 732,1164 548,1164" fill="#fdf5e6"/>
  <polygon points="552,1142 638,1064 641,1061 548,1146" fill="#e6efe1"/>
  <g stroke="#f7e3b8" stroke-width="1" fill="none"><path d="M548 1138 L638 1060 L705 1135"/><path d="M594 1102 L670 1164"/><path d="M670 1097 L625 1139 L580 1164"/><path d="M560 1160 L625 1139"/></g>
  <polygon points="669,1095 695,1071 712,1091 731,1108 703,1133" fill="#f3f1ec" stroke="#e8e4dc" stroke-width="1"/>
  <polygon points="907,880 910,880 957,934 737,1138 731,1133 922.6,955" fill="#f2f3f5"/>
  <path d="M922 957 L731 1133" stroke="#efdcc6" stroke-width="3"/>
  
  <polygon points="548,1007 556,1001 572,1018 622,972 644,996 548,1083" fill="#dde6e1"/>
  <polygon points="927,1141 962,1057 977,1052 1035,1021 1088,1082 1054,1107 997,1164 915,1164" fill="#fdf3df"/>
  <!-- courtyard -->
  <polygon points="840,1142 876,1090 966,1058 926,1142 885,1164 855,1164" fill="#c4e3cb"/>
  <path d="M838 1142 L876 1090 L966 1057" stroke="#efdcc6" stroke-width="3" fill="none"/>
  <path d="M917 1086 Q912 1120 920 1164" stroke="#fff" stroke-width="3" fill="none"/>
  <!-- museum inner lines -->
  <g stroke="#f6e3c3" stroke-width="1" fill="none">
    <path d="M1000 1060 L1080 1140"/><path d="M975 1080 L1050 1150"/><path d="M960 1110 L1010 1160"/>
    <path d="M1030 1035 L1075 1080"/><path d="M980 1030 L940 1070"/>
    
  </g>
  <path d="M1090 1083 L965 1164" stroke="#efdcc6" stroke-width="3"/>
  <polygon points="1040,1080 1052,1072 1000,1030 990,1040" fill="#efefef"/>
  <!-- paths bottom middle -->
  <g stroke="#3ea85b" stroke-width="1.6" fill="none">
    <path d="M1029 880 L1027 903 L1022 959 Q1024 982 1050 1016 L1105 1083"/>
    <path d="M1027 903 L1077 910 Q1083 908 1084 900 L1087 880"/>
    <path d="M1155 880 L1152 886 L1130 889 L1128 919 L1107 926 L1098 958"/>
    <path d="M1028 988 L1075 963 Q1092 955 1106 960 Q1112 966 1127 994"/>
    <path d="M1097 1083 Q1096 1020 1127 994 Q1150 988 1175 996 Q1198 1010 1199 1045 Q1198 1070 1183 1083"/>
    <path d="M1289 880 L1292 952 L1307 1042 L1340 1158"/>
    <path d="M1339 1016 L1283 1067 L1239 1107"/>
    <path d="M1283 1067 L1295 1077"/>
    <path d="M1339 1116 L1311 1126 L1269 1164"/>
    <path d="M1175 1164 L1185 1155"/>
    <path d="M1474 880 L1440 924 L1409 958 L1380 986 L1354 1002 L1339 1016"/>
    <path d="M1699 880 L1717 1044 L1749 1152 L1752 1164"/>
    <path d="M1717 1044 L1664 1063"/>
    <path d="M1643 1069 L1630 1073 Q1612 1082 1597 1102 L1582 1121 L1558 1164"/>
    <path d="M1330 1121 L1366 1113 L1409 1116 L1474 1135 L1503 1152"/>
  </g>
  <!-- pond -->
  <circle cx="1147" cy="1042" r="44" fill="#8ab0f3"/>
  <!-- roads -->
  <g fill="none" stroke-linecap="butt" stroke-linejoin="round">
    <path d="M1514 870 Q1480 935 1400 1000 L1340 1052 L1205 1172" stroke="#d2d4d7" stroke-width="27"/>
    <path d="M1365 1040 Q1460 1043 1530 1075 Q1600 1108 1655 1172" stroke="#d2d4d7" stroke-width="23"/>
    <path d="M1592 870 L1651 1065 L1681 1172" stroke="#d2d4d7" stroke-width="23"/>
    <path d="M1514 870 Q1480 935 1400 1000 L1340 1052 L1205 1172" stroke="#fff" stroke-width="24"/>
    <path d="M1365 1040 Q1460 1043 1530 1075 Q1600 1108 1655 1172" stroke="#fff" stroke-width="20"/>
    <path d="M1592 870 L1651 1065 L1681 1172" stroke="#fff" stroke-width="20"/>
  </g>
  <g fill="#a9adb3">
    <path d="M1437 967 l8 -6 v3 h5 v2 h-5 v3z"/>
    <path d="M1462 1052 l8 -4 v3 h6 v2 h-6 v3z"/>
    <path d="M1648 1041 l-4 8 h3 v6 h2 v-6 h3z"/>
    <path d="M1268 1115 l8 -6 v3 h5 v3 h-5 v3z"/>
  </g>
  <text x="1467" y="947" font-size="14" fill="#5f6368" transform="rotate(-55 1467 947)">Hagiwara Te</text>
  <text x="1388" y="1051" font-size="14" fill="#5f6368" transform="rotate(5 1389 1050)">Bowl Dr</text>
  <text x="1543" y="1095" font-size="14" fill="#5f6368" transform="rotate(29 1544 1094)">Bowl Dr</text>
  <text x="1592" y="881" font-size="14" fill="#5f6368" transform="rotate(71 1592 881)">sic Concourse Dr</text>
  <text x="1226" y="1163" font-size="14" fill="#5f6368" transform="rotate(-42 1226 1163)">den Dr</text>
  <!-- POI labels -->
  <text x="903" y="894" font-size="13.5" fill="#1a7d8c" text-anchor="end">Hamon</text>
  <text x="903" y="908" font-size="13.5" fill="#1a7d8c" text-anchor="end" textLength="117">Observation Tower</text>
  <path d="M880 941 L872 928 A10 10 0 1 1 888 928 Z" fill="#1a9bb5"/>
  <rect x="874" y="917" width="12" height="9" rx="1.5" fill="#fff"/><circle cx="880" cy="921.5" r="2.5" fill="#1a9bb5"/>
  <text x="838" y="1025" font-size="10.5" fill="#5f6b76" textLength="91">Ticketing Front Desk</text>
  <circle cx="940" cy="1022" r="8" fill="#5f7381"/><text x="940" y="1026.5" font-size="11" font-weight="bold" fill="#fff" text-anchor="middle">?</text>
  <g fill="#5f7381"><circle cx="887" cy="1051" r="8"/><circle cx="959" cy="1091" r="8"/><circle cx="779" cy="1119" r="8"/><circle cx="1010" cy="1126" r="8"/><circle cx="732" cy="1092" r="8"/><circle cx="847" cy="1168" r="8"/><circle cx="1592" cy="1150" r="8"/></g>
  <g stroke="#fff" stroke-width="1.4" fill="none"><path d="M882 1050 q3 -3 5 0 t5 2"/><path d="M955 1089 l3 3 l2 -2 l3 3"/><path d="M775 1117 l3 3 l2 -2 l3 3"/><path d="M1006 1128 l3 -3 l4 -3"/><rect x="728" y="1090" width="8" height="6"/></g>
  <circle cx="689" cy="1084" r="8" fill="#6c71c4"/><circle cx="705" cy="1113" r="8" fill="#6c71c4"/>
  <rect x="687.5" y="1080" width="3" height="8" fill="#fff"/><circle cx="689" cy="1078.5" r="1.5" fill="#fff"/>
  <path d="M703 1118 l2 -8 l2 8z" fill="#fff"/><circle cx="705" cy="1108" r="1.5" fill="#fff"/>
  <text x="912" y="1080" font-size="10.5" fill="#5f6b76" text-anchor="middle" transform="rotate(-20 912 1080)">Entrance</text>
  <text x="916" y="1091" font-size="10.5" fill="#5f6b76" text-anchor="middle" transform="rotate(-20 916 1091)">/ Exit</text>
  <g font-size="10.5" fill="#5f6b76">
    <text x="1034" y="1050" transform="rotate(50 1034 1050)">William and</text>
    <text x="1018" y="1048" transform="rotate(50 1018 1048)">Gretchen Kimball</text>
    <text x="1008" y="1054" transform="rotate(50 1008 1054)">Education Gallery</text>
    <text x="955" y="1140" transform="rotate(50 955 1140)">Koret</text>
    <text x="938" y="1140" transform="rotate(50 938 1140)">Auditori</text>
    <text x="568" y="1143" transform="rotate(-40 568 1143)">Morgan</text>
    <text x="572" y="1156" transform="rotate(-40 572 1156)">and Betty</text>
    <text x="575" y="1169" transform="rotate(-40 575 1169)">Flax Room</text>
  </g>
  <text x="641" y="1155" font-size="13.6" font-weight="bold" fill="#1a7d8c" textLength="116">de Young Museum</text>
  <text x="646" y="1168" font-size="11.5" fill="#1a7d8c">Fine-arts museum with</text>
  <circle cx="770" cy="1155" r="10" fill="#1a9bb5"/><path d="M764 1153 l6 -4 l6 4z M765 1154h10v6h-10z" fill="#fff"/>
  <text x="557" y="1158" font-size="17" font-weight="bold" fill="#fff" stroke="#9aa0a6" stroke-width="0.8">Google</text>
  <!-- attribution -->
  <rect x="1394" y="1150" width="370" height="14" fill="#f5f5f5" opacity="0.85"/>
  <g font-size="10" fill="#222">
    <text x="1399" y="1160">Map data ©2022 Google</text>
    <text x="1521" y="1160">10 m</text>
    <text x="1603" y="1160">Terms of Use</text>
    <text x="1675" y="1160">Report a map error</text>
  </g>
  <path d="M1546 1153 v5 h43 v-5" stroke="#333" stroke-width="1.5" fill="none"/>
</svg>
<!-- map controls -->
<div class="a" style="left:558px;top:199px;width:40px;height:40px;background:#fff;border-radius:2px;box-shadow:0 1px 4px rgba(0,0,0,.3)"></div>
<svg class="a" style="left:566px;top:203px" width="24" height="32" viewBox="0 0 24 32"><circle cx="12" cy="6" r="5" fill="#f9ab16"/><path d="M5 12h14l3 10h-3l-1-5v13h-4v-8h-4v8H6V17l-1 5H2z" fill="#f9ab16"/><path d="M9 12l3 5 3-5" stroke="#e05a2b" stroke-width="1.2" fill="none"/></svg>
<div class="a" style="left:608px;top:199px;width:248px;height:37px;background:#fff;border-radius:3px;box-shadow:0 2px 5px rgba(0,0,0,.3)"></div>
<svg class="a" style="left:608px;top:199px" width="248" height="37" viewBox="608 199 248 37">
  <g fill="#9a9a9a"><rect x="612" y="207.5" width="4.5" height="4.5" rx="1"/><rect x="619.5" y="207.5" width="4.5" height="4.5" rx="1"/><rect x="612" y="214.5" width="4.5" height="4.5" rx="1"/><rect x="619.5" y="214.5" width="4.5" height="4.5" rx="1"/><rect x="612" y="221.5" width="4.5" height="4.5" rx="1"/><rect x="619.5" y="221.5" width="4.5" height="4.5" rx="1"/></g>
  <g fill="#333" stroke="#333">
    <path d="M642 227 Q634 218 634 213 A8 8 0 0 1 650 213 Q650 218 642 227z" stroke="none"/><circle cx="642" cy="213" r="3" fill="#fff" stroke="none"/>
    <circle cx="668" cy="214" r="6" fill="none" stroke-width="2.6"/><path d="M672.5 218.5l6 6" stroke-width="3"/>
    <circle cx="696" cy="214" r="6" fill="none" stroke-width="2.6"/><path d="M700.5 218.5l6 6" stroke-width="3"/><path d="M696 210.5v7M692.5 214h7" stroke-width="1.8"/>
    <path d="M719.5 210.5l13 13M732.5 210.5l-13 13" stroke-width="2.2"/><path d="M717 208h6.5l-6.5 6.5zM735 208h-6.5l6.5 6.5zM717 226h6.5l-6.5-6.5zM735 226h-6.5l6.5-6.5z" stroke="none"/>
    <path d="M756 209.5L763 216.5L756.5 223.5H749.8L745.5 219.3Z" fill="none" stroke-width="2"/><path d="M756 208.5L764 216.5L757.5 223L751 215.8Z" stroke="none"/><path d="M750 224.5h14" stroke-width="2"/>
    <path d="M776.5 213A7.5 7.5 0 1 1 778 223" fill="none" stroke-width="2.4"/><path d="M772 208v7.5h7.5z" stroke="none"/>
    <path d="M803 214v-5h5M817 214v-5h-5M803 220v5h5M817 220v5h-5" fill="none" stroke-width="2.6"/>
    <path d="M838 208l10 5-10 5-10-5z" stroke="none"/><path d="M828 217l10 5 10-5M828 221l10 5 10-5" fill="none" stroke-width="2.4"/>
  </g>
</svg>
<div class="a" style="left:1576px;top:199px;width:48px;height:29px;background:#fff;border-radius:2px;box-shadow:0 1px 3px rgba(0,0,0,.3)"></div>
<div class="t" style="left:1582px;top:206px;font-size:11px;font-weight:bold;line-height:14px;color:#1d2733">Traffic</div>
<div class="a" style="left:1634px;top:199px;width:70px;height:37px;background:#fff;border-radius:2px;box-shadow:0 1px 3px rgba(0,0,0,.3)"></div>
<div class="t" style="left:1648px;top:207px;font-size:18px;font-weight:bold;line-height:22px;color:#000">Map</div>
<svg class="a" style="left:1688px;top:215px" width="8" height="5" viewBox="0 0 8 5"><path d="M0 0h8L4 5z" fill="#666"/></svg>
<!-- simulator popup -->
<div class="a" style="left:1072px;top:1083px;width:168px;height:74px;background:#fff;border-radius:5px;box-shadow:0 0 0 1px rgba(0,0,0,.12),0 2px 4px rgba(0,0,0,.15)"></div>
<div class="t" style="left:1080px;top:1092px;font-size:12.8px;line-height:16px;font-weight:bold;color:#000">Simulator</div>
<div class="t" style="left:1080px;top:1119px;font-size:12.8px;line-height:16px;color:#6b6b6b">Set destination(s)</div>
<div class="a" style="left:1213px;top:1116px;width:18px;height:22px;background:#f5f5f7;border:1px solid #dcdde0;border-radius:3px"></div>
<div class="t" style="left:1217px;top:1119px;font-size:12.8px;line-height:16px;color:#000">D</div>
<!-- ============ DIALOG ============ -->
<div class="a" style="left:228px;top:265px;width:1376px;height:615px;background:#f3f3f5;box-shadow:0 3px 8px rgba(0,0,0,.3),0 8px 30px rgba(0,0,0,.4)"></div>
<div class="a" style="left:228px;top:265px;width:1376px;height:32px;background:#0b1520"></div>
<div class="t" style="left:236px;top:273px;font-size:12.8px;line-height:16px;color:#fff">Status : Server Terminal</div>
<div class="a" style="left:1519px;top:280px;width:10px;height:1.6px;background:#fff"></div>
<svg class="a" style="left:1551px;top:276px" width="10" height="10" viewBox="0 0 10 10"><path d="M5 0v10M0 5h10" stroke="#fff" stroke-width="1.6"/></svg>
<svg class="a" style="left:1583px;top:276px" width="10" height="10" viewBox="0 0 10 10"><path d="M1 1l8 8M9 1L1 9" stroke="#fff" stroke-width="1.5"/></svg>
<div class="a" style="left:508px;top:297px;width:1096px;height:530px;background:#fff"></div>
<div class="a" style="left:507px;top:297px;width:1px;height:530px;background:#dfe1e6"></div>
<div class="a" style="left:508px;top:357px;width:1096px;height:1px;background:#dfe1e6"></div>
<div class="a" style="left:508px;top:815px;width:1096px;height:12px;background:linear-gradient(#fff,#f4f4f6)"></div>
<div class="t" style="left:268px;top:321px;font-size:12.8px;line-height:16px;color:#1a2230">Connections</div>
<div class="t" style="left:268px;top:353px;font-size:12.8px;line-height:16px;color:#1a2230">Unknown connections</div>
<div class="a" style="left:236px;top:377px;width:263px;height:32px;border-radius:4px;background:#3e4757"></div>
<div class="t" style="left:268px;top:385px;font-size:12.8px;line-height:16px;color:#fff">Devices</div>
<div class="t" style="left:268px;top:417px;font-size:12.8px;line-height:16px;color:#1a2230">Queue</div>
<div class="t" style="left:540px;top:315px;font-size:18.4px;line-height:22px;font-weight:bold;color:#1a2230">Devices</div>
<div class="a" style="left:524px;top:374px;width:300px;height:32px;border:1px solid #8d96a5;border-radius:4px;background:#fff"></div>
<svg class="a" style="left:532px;top:382px" width="17" height="17" viewBox="0 0 17 17"><circle cx="7" cy="7" r="5.3" stroke="#6b7280" stroke-width="2.2" fill="none"/><path d="M11 11l4.5 4.5" stroke="#6b7280" stroke-width="2.6"/></svg>
<div class="t" style="left:557px;top:382px;font-size:12.8px;line-height:16px;color:#5c6470">Search for connections</div>
<div class="t" style="left:524px;top:414px;font-size:12.9px;line-height:16px;color:#7d8696">Search by IMEI, phone number, user, device type or protocol.</div>
<div class="a" style="left:524px;top:450px;width:1064px;height:25px;background:#f2f3f5;border-bottom:1px solid #d5d9e0"></div>

<div class="t" style="left:532px;top:454px;font-size:12.4px;line-height:16px;font-weight:bold;color:#1a2230">Username</div>
<div class="t" style="left:636px;top:454px;font-size:12.4px;line-height:16px;font-weight:bold;color:#1a2230">Name</div>
<div class="t" style="left:741px;top:454px;font-size:12.4px;line-height:16px;font-weight:bold;color:#1a2230">Email</div>
<div class="t" style="left:845px;top:454px;font-size:12.4px;line-height:16px;font-weight:bold;color:#1a2230">IMEI</div>
<div class="t" style="left:950px;top:454px;font-size:12.4px;line-height:16px;font-weight:bold;color:#1a2230">Phone</div>
<div class="t" style="left:1055px;top:454px;font-size:12.4px;line-height:16px;font-weight:bold;color:#1a2230">Type</div>
<div class="t" style="left:1159px;top:454px;font-size:12.4px;line-height:16px;font-weight:bold;color:#1a2230">Protocol</div>
<div class="t" style="left:1263px;top:454px;font-size:12.4px;line-height:16px;font-weight:bold;color:#1a2230">Last position</div>
<div class="t" style="left:1368px;top:454px;font-size:12.4px;line-height:16px;font-weight:bold;color:#1a2230">Application(s)</div>
<div class="t" style="left:1473px;top:454px;font-size:12.4px;line-height:16px;font-weight:bold;color:#1a2230">Actions</div>
<div class="a" style="left:524px;top:498px;width:1064px;height:1px;background:#d9dde5"></div>
<div class="t" style="left:532px;top:479px;font-size:12.8px;line-height:16px;color:#1a2230;letter-spacing:.45px;">13fbc0f0-79df...</div>
<div class="t" style="left:636px;top:479px;font-size:12.8px;line-height:16px;color:#1a2230;">GHI 030</div>
<div class="t" style="left:845px;top:479px;font-size:12.8px;line-height:16px;color:#1a2230;letter-spacing:.45px;">SIM68357911...</div>
<div class="t" style="left:1055px;top:479px;font-size:12.8px;line-height:16px;color:#1a2230;letter-spacing:-.2px;">GpsGate Simul...</div>
<div class="t" style="left:1159px;top:479px;font-size:12.8px;line-height:16px;color:#1a2230;">GpsGate</div>
<div class="t" style="left:1263px;top:479px;font-size:12.8px;line-height:16px;color:#1a2230;letter-spacing:.45px;">6/15/2022 3:5...</div>
<div class="t" style="left:1368px;top:479px;font-size:12.8px;line-height:16px;color:#1a2230;">First</div>
<div class="a" style="left:524px;top:522px;width:1064px;height:1px;background:#d9dde5"></div>
<div class="t" style="left:532px;top:503px;font-size:12.8px;line-height:16px;color:#1a2230;letter-spacing:.45px;">c7c2b451-66...</div>
<div class="t" style="left:636px;top:503px;font-size:12.8px;line-height:16px;color:#1a2230;">ABC 001</div>
<div class="t" style="left:845px;top:503px;font-size:12.8px;line-height:16px;color:#1a2230;letter-spacing:.45px;">SIM22263485...</div>
<div class="t" style="left:1055px;top:503px;font-size:12.8px;line-height:16px;color:#1a2230;letter-spacing:-.2px;">GpsGate Simul...</div>
<div class="t" style="left:1159px;top:503px;font-size:12.8px;line-height:16px;color:#1a2230;">GpsGate</div>
<div class="t" style="left:1263px;top:503px;font-size:12.8px;line-height:16px;color:#1a2230;letter-spacing:.45px;">6/14/2022 10:...</div>
<div class="t" style="left:1368px;top:503px;font-size:12.8px;line-height:16px;color:#1a2230;">First</div>
<div class="a" style="left:524px;top:546px;width:1064px;height:1px;background:#d9dde5"></div>
<div class="t" style="left:532px;top:527px;font-size:12.8px;line-height:16px;color:#1a2230;letter-spacing:.45px;">a2d0f0a3-943...</div>
<div class="t" style="left:636px;top:527px;font-size:12.8px;line-height:16px;color:#1a2230;">DEF 200</div>
<div class="t" style="left:845px;top:527px;font-size:12.8px;line-height:16px;color:#1a2230;letter-spacing:.45px;">SIM46834360...</div>
<div class="t" style="left:1055px;top:527px;font-size:12.8px;line-height:16px;color:#1a2230;letter-spacing:-.2px;">GpsGate Simul...</div>
<div class="t" style="left:1159px;top:527px;font-size:12.8px;line-height:16px;color:#1a2230;">GpsGate</div>
<div class="t" style="left:1263px;top:527px;font-size:12.8px;line-height:16px;color:#1a2230;letter-spacing:.45px;">6/10/2022 10:...</div>
<div class="t" style="left:1368px;top:527px;font-size:12.8px;line-height:16px;color:#1a2230;">First</div>
<div class="a" style="left:524px;top:570px;width:1064px;height:1px;background:#d9dde5"></div>
<div class="t" style="left:532px;top:551px;font-size:12.8px;line-height:16px;color:#1a2230;letter-spacing:.45px;">9cb34f79-f59...</div>
<div class="t" style="left:636px;top:551px;font-size:12.8px;line-height:16px;color:#1a2230;">Forklift 3</div>
<div class="t" style="left:845px;top:551px;font-size:12.8px;line-height:16px;color:#1a2230;letter-spacing:.45px;">SIM49764898...</div>
<div class="t" style="left:1055px;top:551px;font-size:12.8px;line-height:16px;color:#1a2230;letter-spacing:-.2px;">GpsGate Simul...</div>
<div class="t" style="left:1159px;top:551px;font-size:12.8px;line-height:16px;color:#1a2230;">GpsGate</div>
<div class="t" style="left:1263px;top:551px;font-size:12.8px;line-height:16px;color:#1a2230;letter-spacing:.45px;">6/1/2022 1:12...</div>
<div class="t" style="left:1368px;top:551px;font-size:12.8px;line-height:16px;color:#1a2230;">PoC - Forklift</div>
<div class="a" style="left:524px;top:594px;width:1064px;height:1px;background:#d9dde5"></div>
<div class="t" style="left:532px;top:575px;font-size:12.8px;line-height:16px;color:#1a2230;">bbfe4d5f-c7e...</div>
<div class="t" style="left:636px;top:575px;font-size:12.8px;line-height:16px;color:#1a2230;">Forklift 2</div>
<div class="t" style="left:845px;top:575px;font-size:12.8px;line-height:16px;color:#1a2230;letter-spacing:.45px;">SIM94363663...</div>
<div class="t" style="left:1055px;top:575px;font-size:12.8px;line-height:16px;color:#1a2230;letter-spacing:-.2px;">GpsGate Simul...</div>
<div class="t" style="left:1159px;top:575px;font-size:12.8px;line-height:16px;color:#1a2230;">GpsGate</div>
<div class="t" style="left:1263px;top:575px;font-size:12.8px;line-height:16px;color:#1a2230;letter-spacing:.45px;">6/1/2022 1:09...</div>
<div class="t" style="left:1368px;top:575px;font-size:12.8px;line-height:16px;color:#1a2230;">PoC - Forklift</div>
<div class="a" style="left:524px;top:618px;width:1064px;height:1px;background:#d9dde5"></div>
<div class="t" style="left:532px;top:599px;font-size:12.8px;line-height:16px;color:#1a2230;letter-spacing:.45px;">cc980c78-c7a...</div>
<div class="t" style="left:636px;top:599px;font-size:12.8px;line-height:16px;color:#1a2230;">Forklift 1</div>
<div class="t" style="left:845px;top:599px;font-size:12.8px;line-height:16px;color:#1a2230;letter-spacing:.45px;">SIM06324411...</div>
<div class="t" style="left:1055px;top:599px;font-size:12.8px;line-height:16px;color:#1a2230;letter-spacing:-.2px;">GpsGate Simul...</div>
<div class="t" style="left:1159px;top:599px;font-size:12.8px;line-height:16px;color:#1a2230;">GpsGate</div>
<div class="t" style="left:1263px;top:599px;font-size:12.8px;line-height:16px;color:#1a2230;letter-spacing:.45px;">6/1/2022 12:3...</div>
<div class="t" style="left:1368px;top:599px;font-size:12.8px;line-height:16px;color:#1a2230;">PoC - Forklift</div>
<div class="a" style="left:524px;top:642px;width:1064px;height:1px;background:#d9dde5"></div>
<div class="t" style="left:532px;top:623px;font-size:12.8px;line-height:16px;color:#1a2230;">admin</div>
<div class="t" style="left:636px;top:623px;font-size:12.8px;line-height:16px;color:#1a2230;">admin</div>
<div class="t" style="left:741px;top:623px;font-size:12.8px;line-height:16px;color:#1a2230;">patrik.larsson...</div>
<div class="t" style="left:1055px;top:623px;font-size:12.8px;line-height:16px;color:#1a2230;">Email</div>
<div class="t" style="left:1159px;top:623px;font-size:12.8px;line-height:16px;color:#1a2230;">Plain</div>
<div class="t" style="left:1368px;top:623px;font-size:12.8px;line-height:16px;color:#1a2230;">Site Administra...</div>
<div class="a" style="left:524px;top:666px;width:1064px;height:1px;background:#d9dde5"></div>
<div class="t" style="left:532px;top:647px;font-size:12.8px;line-height:16px;color:#1a2230;">proxy</div>
<div class="t" style="left:1055px;top:647px;font-size:12.8px;line-height:16px;color:#1a2230;letter-spacing:-.2px;">GpsGate Client...</div>
<div class="t" style="left:1159px;top:647px;font-size:12.8px;line-height:16px;color:#1a2230;">GpsGate</div>
<div class="a" style="left:236px;top:836px;width:194px;height:36px;border-radius:4px;background:#d9dde6"></div>
<svg class="a" style="left:248px;top:846px" width="16" height="16" viewBox="0 0 16 16"><path d="M7.5 7V4.5a3 3 0 0 1 6 0V6" stroke="#1f9e3e" stroke-width="2.2" fill="none"/><rect x="1" y="7" width="10" height="8" rx="1" fill="#1f9e3e"/><rect x="5" y="10" width="2" height="2" fill="#d9dde6"/></svg>
<div class="t" style="left:276px;top:846px;font-size:12.8px;line-height:16px;color:#1a2230">Allowed to make changes</div>
<!-- ============ BOTTOM RIGHT PANEL ============ -->
<div class="a" style="left:548px;top:1172px;width:69px;height:30px;background:#f5f5f5;border-radius:3px 3px 0 0"></div>
<div class="t" style="left:556px;top:1179px;font-size:12.8px;line-height:16px;color:#1a2230">Status</div>
<div class="a" style="left:617px;top:1172px;width:544px;height:30px;background:#5a6270;border-radius:0 3px 0 0"></div>
<div class="t" style="left:625px;top:1179px;font-size:12.8px;line-height:16px;color:#dfe2e7">Vehicle info</div>
<div class="t" style="left:723px;top:1179px;font-size:12.8px;line-height:16px;color:#dfe2e7">Geofence</div>
<div class="t" style="left:816px;top:1179px;font-size:13.2px;line-height:16px;color:#dfe2e7">Points of Interest</div>
<div class="t" style="left:953px;top:1179px;font-size:12.8px;line-height:16px;color:#dfe2e7">Events (2)</div>
<div class="t" style="left:1049px;top:1179px;font-size:12.8px;line-height:16px;color:#dfe2e7">GeofenceUsers</div>
<svg class="a" style="left:1742px;top:1183px" width="10" height="7" viewBox="0 0 10 7"><path d="M1.5 1.5l3.5 3.5 3.5-3.5" stroke="#fff" stroke-width="1.8" fill="none"/></svg>
<div class="a" style="left:548px;top:1201px;width:1216px;height:175px;background:#f5f5f5"></div>
<div class="a" style="left:569px;top:1219px;width:14px;height:14px;background:#7f7f7f;border-radius:1px"></div>
<div class="t" style="left:592px;top:1217px;font-size:14px;line-height:18px;font-weight:bold;color:#1a2230">GHI <span class="m" style="font-size:1em">030</span></div>
<div class="t" style="left:1546px;top:1219px;font-size:10.8px;line-height:14px;color:#555">Last seen: 3:54:31 PM</div>
<div class="a" style="left:1671px;top:1211px;width:60px;height:31px;border-radius:5px;background:#dde1e9"></div>
<div class="a" style="left:1673px;top:1213px;width:27px;height:27px;border-radius:4px;background:#3e4757"></div>
<svg class="a" style="left:1678px;top:1218px" width="17" height="17" viewBox="0 0 17 17"><rect x="0" y="0" width="7.6" height="7.6" fill="#fff"/><rect x="9.4" y="0" width="7.6" height="7.6" fill="#fff"/><rect x="0" y="9.4" width="7.6" height="7.6" fill="#fff"/><rect x="9.4" y="9.4" width="7.6" height="7.6" fill="#fff"/></svg>
<svg class="a" style="left:1707px;top:1219px" width="17" height="15" viewBox="0 0 17 15"><rect x="0" y="0.5" width="3" height="2.6" fill="#1b2230"/><rect x="5" y="0.5" width="12" height="2.6" fill="#1b2230"/><rect x="0" y="6" width="3" height="2.6" fill="#1b2230"/><rect x="5" y="6" width="12" height="2.6" fill="#1b2230"/><rect x="0" y="11.5" width="3" height="2.6" fill="#1b2230"/><rect x="5" y="11.5" width="12" height="2.6" fill="#1b2230"/></svg>
<svg class="a" style="left:1739px;top:1210px" width="17" height="16" viewBox="0 0 17 16"><path d="M8 3H2v11h11V8" stroke="#1b2230" stroke-width="2" fill="none"/><path d="M6 10.5l.6-3L13 1l2.4 2.4L9 9.9z" fill="#1b2230"/></svg>

<div class="a" style="left:568px;top:1250px;width:140px;height:104px;background:#fff;border:1px solid #d6d6d6"></div>
<div class="t" style="left:568px;top:1272px;width:140px;text-align:center;font-size:12.8px;line-height:16px;color:#1a2230"><span style="display:inline-block;width:19px"></span>Altitude</div>
<div class="t" style="left:568px;top:1312px;width:140px;text-align:center;font-size:16px;line-height:20px;color:#1a2230;font-family:"Liberation Mono",monospace;">0 m</div>
<div class="a" style="left:716px;top:1250px;width:140px;height:104px;background:#fff;border:1px solid #d6d6d6"></div>
<div class="t" style="left:716px;top:1270px;width:140px;text-align:center;font-size:12.8px;line-height:16px;color:#1a2230">HarshAcceleration...</div>
<svg class="a" style="left:774px;top:1307px" width="25" height="19" viewBox="0 0 25 19"><path d="M2 10l7 7L23 2" stroke="#d3d3d3" stroke-width="4.4" fill="none"/></svg>
<div class="a" style="left:864px;top:1250px;width:140px;height:104px;background:#fff;border:1px solid #d6d6d6"></div>
<div class="t" style="left:864px;top:1270px;width:140px;text-align:center;font-size:12.8px;line-height:16px;color:#1a2230">HarshBraking</div>
<svg class="a" style="left:922px;top:1307px" width="25" height="19" viewBox="0 0 25 19"><path d="M2 10l7 7L23 2" stroke="#d3d3d3" stroke-width="4.4" fill="none"/></svg>
<div class="a" style="left:1012px;top:1250px;width:140px;height:104px;background:#fff;border:1px solid #d6d6d6"></div>
<div class="t" style="left:1012px;top:1270px;width:140px;text-align:center;font-size:12.8px;line-height:16px;color:#1a2230">HarshTurningDigital</div>
<svg class="a" style="left:1070px;top:1307px" width="25" height="19" viewBox="0 0 25 19"><path d="M2 10l7 7L23 2" stroke="#d3d3d3" stroke-width="4.4" fill="none"/></svg>
<div class="a" style="left:1160px;top:1250px;width:140px;height:104px;background:#fff;border:1px solid #d6d6d6"></div>
<div class="t" style="left:1160px;top:1272px;width:140px;text-align:center;font-size:12.8px;line-height:16px;color:#1a2230"><span style="display:inline-block;width:19px"></span>Heading</div>
<div class="t" style="left:1160px;top:1312px;width:140px;text-align:center;font-size:16px;line-height:20px;color:#1a2230;">E 88.5°</div>
<div class="a" style="left:1308px;top:1250px;width:140px;height:104px;background:#fff;border:1px solid #d6d6d6"></div>
<div class="t" style="left:1308px;top:1270px;width:140px;text-align:center;font-size:12.8px;line-height:16px;color:#1a2230">Ignition</div>
<svg class="a" style="left:1366px;top:1307px" width="25" height="19" viewBox="0 0 25 19"><path d="M2 10l7 7L23 2" stroke="#d3d3d3" stroke-width="4.4" fill="none"/></svg>
<div class="a" style="left:1456px;top:1250px;width:140px;height:104px;background:#fff;border:1px solid #d6d6d6"></div>
<div class="t" style="left:1456px;top:1270px;width:140px;text-align:center;font-size:12.8px;line-height:16px;color:#1a2230">SOS</div>
<svg class="a" style="left:1514px;top:1307px" width="25" height="19" viewBox="0 0 25 19"><path d="M2 10l7 7L23 2" stroke="#d3d3d3" stroke-width="4.4" fill="none"/></svg>
<div class="a" style="left:1604px;top:1250px;width:140px;height:104px;background:#fff;border:1px solid #d6d6d6"></div>
<div class="t" style="left:1604px;top:1272px;width:140px;text-align:center;font-size:12.8px;line-height:16px;color:#1a2230"><span style="display:inline-block;width:19px"></span>Speed</div>
<div class="t" style="left:1604px;top:1312px;width:140px;text-align:center;font-size:16px;line-height:20px;color:#1a2230;">-</div>
<svg class="a" style="left:606px;top:1272px" width="15" height="15" viewBox="0 0 15 15"><path d="M7.5 14V2M2 7.5L7.5 2 13 7.5" stroke="#1d8fbd" stroke-width="2.2" fill="none"/></svg>
<svg class="a" style="left:1196px;top:1272px" width="15" height="15" viewBox="0 0 15 15"><circle cx="7.5" cy="7.5" r="7.5" fill="#1d8fbd"/><path d="M9.5 3.5L6.8 8.2 5.5 11.5 8.2 6.8z" stroke="#fff" stroke-width="1.3" fill="none"/></svg>
<svg class="a" style="left:1645px;top:1272px" width="16" height="14" viewBox="0 0 16 14"><path d="M8 1A7.5 7.5 0 0 0 .5 8.5V13h15V8.5A7.5 7.5 0 0 0 8 1z" fill="#1d8fbd"/><path d="M8 11L11 4" stroke="#fff" stroke-width="1.4"/><circle cx="8" cy="11" r="1.4" fill="#fff"/></svg>

</div>
<div class="a" style="left:56px;top:38px;width:1720px;height:1366px;border-radius:10px;box-shadow:inset 0 0 0 1px rgba(120,120,125,.45);pointer-events:none"></div>
</body></html>
